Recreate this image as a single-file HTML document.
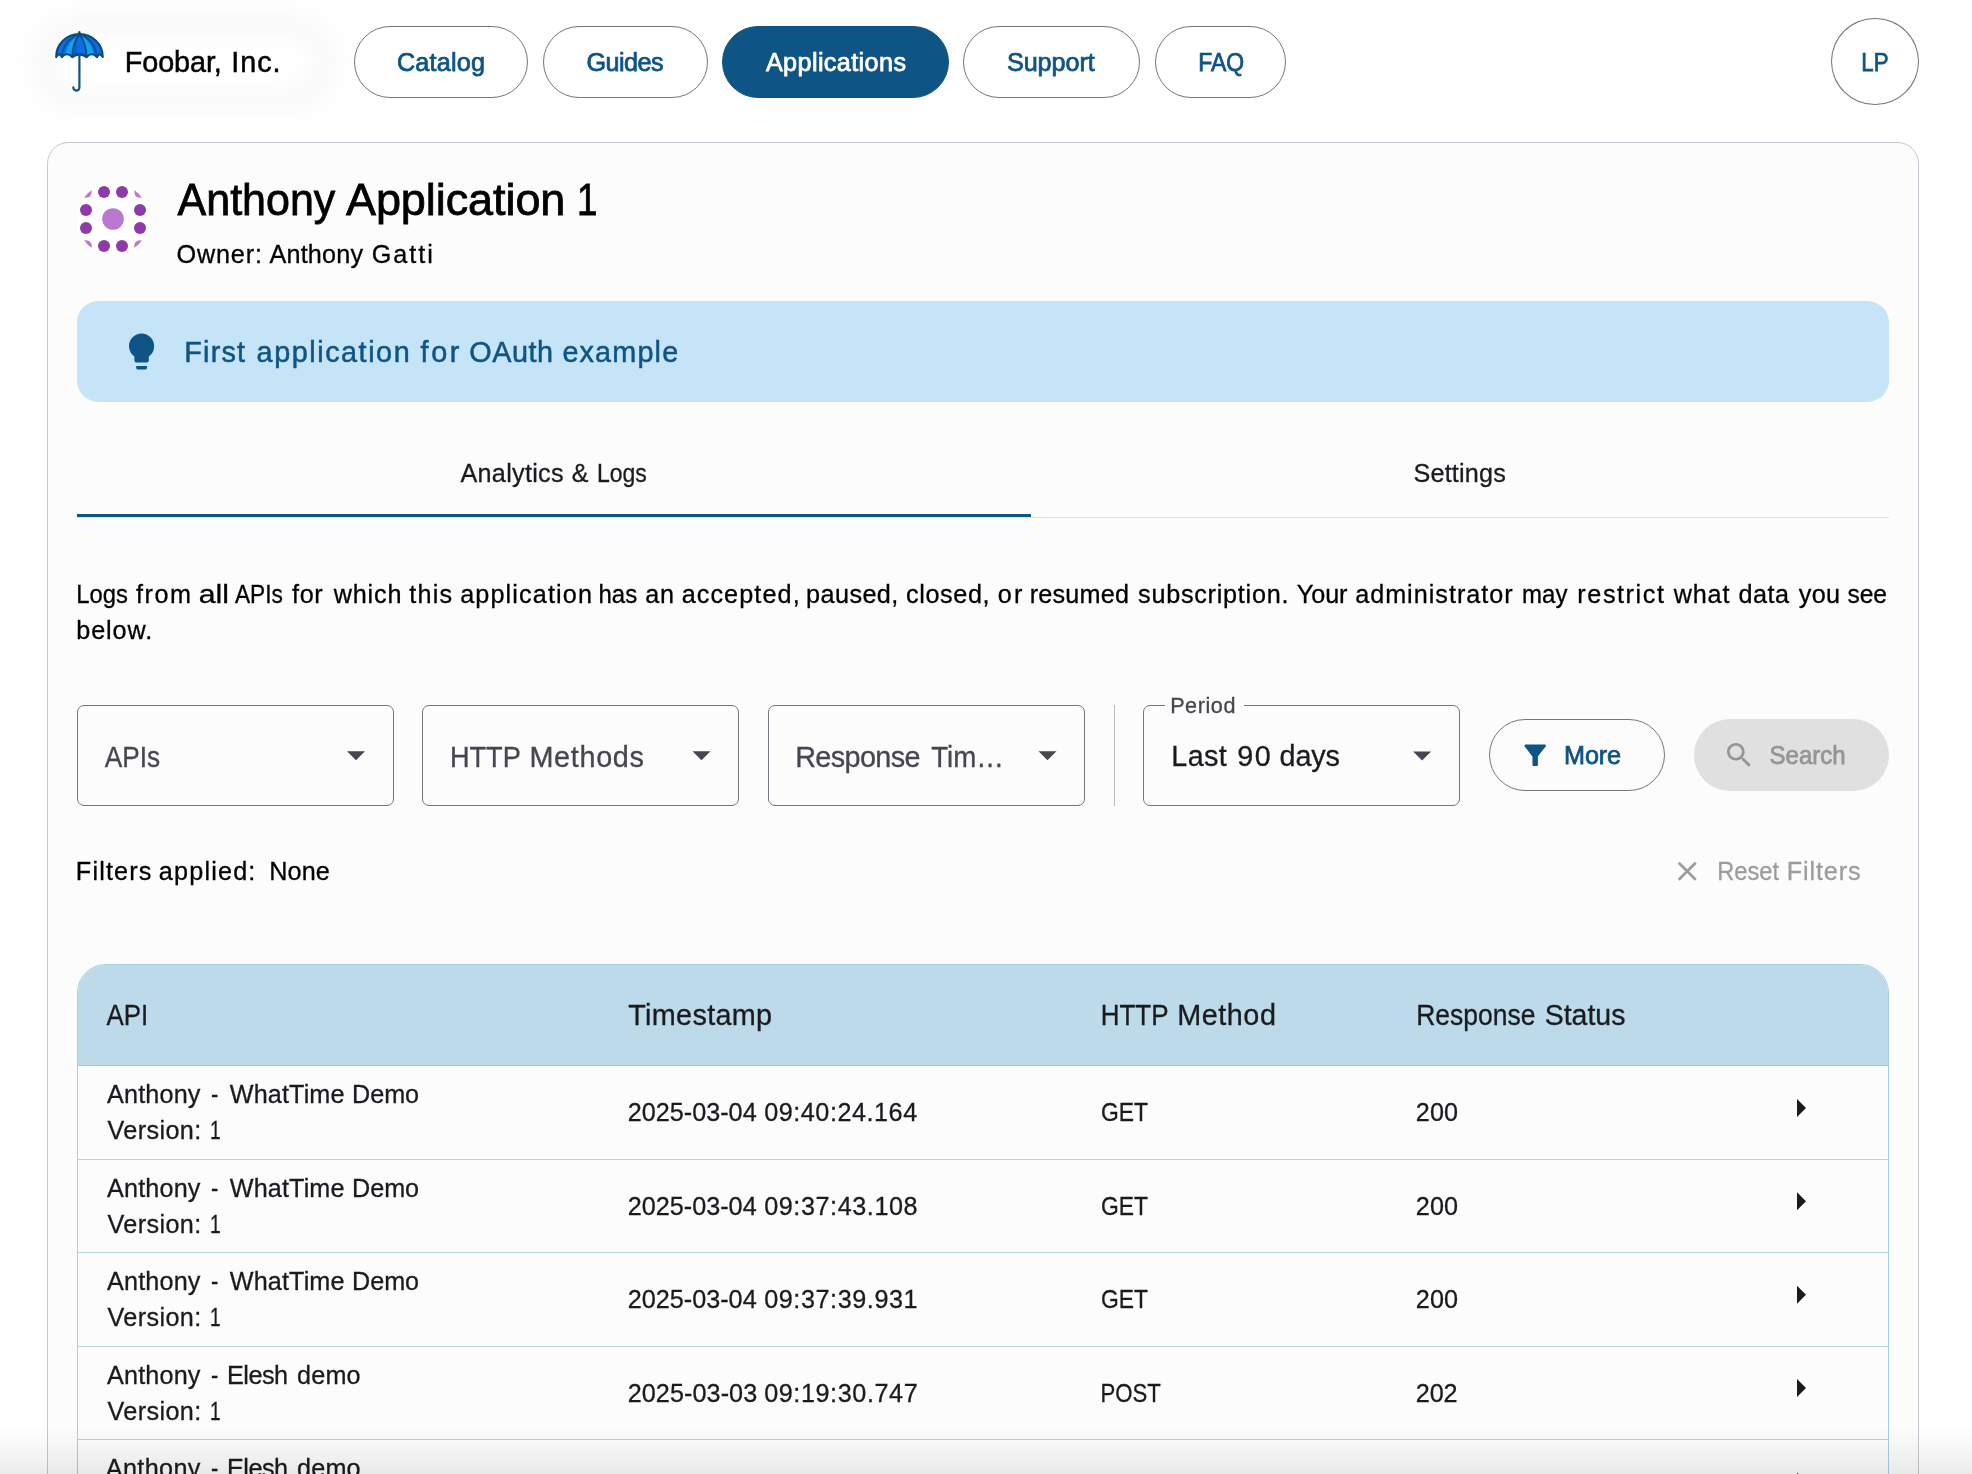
<!DOCTYPE html>
<html lang="en">
<head>
<meta charset="utf-8">
<title>Anthony Application 1 - Foobar, Inc.</title>
<style>
*{box-sizing:border-box;margin:0;padding:0}
html,body{width:1972px;height:1474px;overflow:hidden;background:#fff}
body{position:relative;font-family:"Liberation Sans",Arial,sans-serif;color:#1a1b1f}
.a{position:absolute}
.t{position:absolute;white-space:nowrap;line-height:1;transform-origin:0 0;font-weight:400;text-decoration:none;display:block}
.pill{position:absolute;top:26px;height:72px;border:1px solid #75767c;border-radius:36px;background:transparent}
.sel{position:absolute;top:705px;height:101px;width:317px;border:1px solid #74757e;border-radius:7px}
.hl{position:absolute;left:78px;width:1810px;height:1px;background:#b4d3e3}
svg{position:absolute;overflow:visible}
#page{position:relative;width:1972px;height:1474px;overflow:hidden}
#txt{position:absolute;left:0;top:0;width:1972px;height:1474px;will-change:transform}
.t{-webkit-text-stroke:0.3px currentColor}
.b{-webkit-text-stroke:0.75px currentColor}
.h{-webkit-text-stroke:0.8px currentColor}
.m{-webkit-text-stroke:0.5px currentColor}
</style>
</head>
<body>
<div id="page">
<!-- header -->
<header>
<div class="a" style="left:34px;top:16px;width:300px;height:92px;border-radius:46px;border:16px solid rgba(0,0,0,0.034);filter:blur(12px)"></div>
<svg id="umb" style="left:44px;top:20px" width="72" height="80" viewBox="0 0 72 80">
  <path d="M12.2 37C12.2 24.4 22.4 14.1 35.4 14.1S58.7 24.4 58.7 37Q55.8 31.6 52.9 37.1Q47.7 31.4 42.6 37.1Q35.4 31.4 28.2 37.1Q23 31.4 17.9 37.1Q15 31.6 12.2 37Z" fill="#0a6fe6"/>
  <path d="M35.4 14.1Q19 20.5 17.9 37.1Q23 31.4 28.2 37.1Q28.7 22.5 35.4 14.1Z" fill="#10a1f6"/>
  <path d="M35.4 14.1Q20.5 20.5 17.9 37.1L21.3 34.2Q23 22.5 35.4 14.1Z" fill="#0a70e8"/>
  <path d="M35.4 14.1Q42.1 22.5 42.6 37.1Q47.7 31.4 52.9 37.1Q51.8 20.5 35.4 14.1Z" fill="#10a1f6"/>
  <path d="M35.4 14.1Q28.7 22.5 28.2 37.1L32.6 34.4Q32.3 22.5 35.4 14.1Z" fill="#0860cc"/>
  <path d="M35.4 14.1Q51.8 20.5 52.9 37.1L50 34.4Q48 22 35.4 14.1Z" fill="#0a66d6"/>
  <g fill="none" stroke="#0d4b79" stroke-width="2.2" stroke-linejoin="round" stroke-linecap="round">
    <path d="M12.2 37C12.2 24.4 22.4 14.1 35.4 14.1S58.7 24.4 58.7 37Q55.8 31.6 52.9 37.1Q47.7 31.4 42.6 37.1Q35.4 31.4 28.2 37.1Q23 31.4 17.9 37.1Q15 31.6 12.2 37Z"/>
    <path d="M35.4 14.1Q19 20.5 17.9 37.1" stroke-width="1.6" stroke="#0c4f8a"/>
    <path d="M35.4 14.1Q28.7 22.5 28.2 37.1" stroke-width="1.8"/>
    <path d="M35.4 14.1Q42.1 22.5 42.6 37.1" stroke-width="1.8"/>
    <path d="M35.4 14.1Q51.8 20.5 52.9 37.1" stroke-width="1.6" stroke="#0c4f8a"/>
    <path d="M35.4 12.2V14.1"/>
    <path d="M35.4 35V67.7a3.05 3.05 0 0 1 -6.1 -0.4" stroke="#14527f"/>
  </g>
</svg>
<nav>
  <div class="pill" style="left:354px;width:174px"></div>
  <div class="pill" style="left:543px;width:165px"></div>
  <div class="pill" style="left:722px;width:227px;background:#0e5484;border-color:#0e5484"></div>
  <div class="pill" style="left:963px;width:177px"></div>
  <div class="pill" style="left:1155px;width:131px"></div>
</nav>
<div class="a" style="left:1831px;top:17.5px;width:88px;height:87.5px;border:1px solid #75767c;border-radius:50%"></div>
</header>

<!-- card -->
<main class="a" style="left:47px;top:142px;width:1872px;height:1400px;border:1px solid #c6c6d0;border-radius:21.6px;background:#fcfcfc"></main>

<svg id="ident" style="left:77px;top:183px" width="72" height="72" viewBox="0 0 72 72">
  <defs><clipPath id="cc"><circle cx="36" cy="36" r="36"/></clipPath></defs>
  <circle cx="36" cy="36" r="36" fill="#fff"/>
  <g clip-path="url(#cc)" fill="#ba78d0">
    <path d="M7 14.6Q15.6 15.6 14.6 7L0 0Z"/><path d="M65 14.6Q56.4 15.6 57.4 7L72 0Z"/><path d="M7 57.4Q15.6 56.4 14.6 65L0 72Z"/><path d="M65 57.4Q56.4 56.4 57.4 65L72 72Z"/>
  </g>
  <g fill="#8e3aa8">
    <circle cx="27" cy="9" r="6"/><circle cx="45" cy="9" r="6"/>
    <circle cx="9" cy="27" r="6"/><circle cx="63" cy="27" r="6"/>
    <circle cx="9" cy="45" r="6"/><circle cx="63" cy="45" r="6"/>
    <circle cx="27" cy="63" r="6"/><circle cx="45" cy="63" r="6"/>
  </g>
  <circle cx="36" cy="36" r="10.8" fill="#ba78d0"/>
</svg>

<!-- banner -->
<div class="a" style="left:77px;top:301px;width:1811.5px;height:100.5px;border-radius:21.6px;background:#c5e4f8"></div>
<svg id="bulb" style="left:120px;top:330px" width="43.2" height="43.2" viewBox="0 0 24 24"><path fill="#0e5484" d="M9 21c0 .55.45 1 1 1h4c.55 0 1-.45 1-1v-1H9v1zm3-19C8.14 2 5 5.14 5 9c0 2.38 1.19 4.47 3 5.74V17c0 .55.45 1 1 1h6c.55 0 1-.45 1-1v-2.26c1.81-1.27 3-3.36 3-5.74 0-3.86-3.14-7-7-7z"/></svg>

<!-- tabs -->
<div class="a" style="left:77px;top:517px;width:1811.5px;height:1px;background:#e1e0e8"></div>
<div class="a" style="left:77px;top:514px;width:954px;height:3px;background:#0e5484"></div>

<!-- filters -->
<div class="sel" style="left:77px"></div>
<div class="sel" style="left:422px"></div>
<div class="sel" style="left:768px"></div>
<div class="a" style="left:1114px;top:705px;width:1px;height:101px;background:#b9b9c0"></div>
<div class="sel" style="left:1143px"></div>
<div class="a" style="left:1165px;top:704px;width:79px;height:3px;background:#fcfcfc"></div>
<svg style="left:0;top:0" width="1972" height="900" viewBox="0 0 1972 900" fill="#45464f">
  <path d="M347 751.3h18l-9 9z"/>
  <path d="M692.5 751.3h18l-9 9z"/>
  <path d="M1038.5 751.3h18l-9 9z"/>
  <path d="M1413.1 751.4h18l-9 9z"/>
</svg>
<div class="a" style="left:1489px;top:719px;width:176px;height:72px;border:1px solid #75767c;border-radius:36px"></div>
<svg style="left:1518.6px;top:738.6px" width="32.4" height="32.4" viewBox="0 0 24 24"><path fill="#0e5484" d="M4.25 5.61C6.27 8.2 10 13 10 13v6c0 .55.45 1 1 1h2c.55 0 1-.45 1-1v-6s3.72-4.8 5.74-7.39c.51-.66.04-1.61-.79-1.61H5.04c-.83 0-1.3.95-.79 1.61z"/></svg>
<div class="a" style="left:1694px;top:719px;width:195px;height:72px;border-radius:36px;background:#e0e0e0"></div>
<svg style="left:1723px;top:739.2px" width="32.4" height="32.4" viewBox="0 0 24 24"><path fill="#959595" d="M15.5 14h-.79l-.28-.27C15.41 12.59 16 11.11 16 9.5 16 5.91 13.09 3 9.5 3S3 5.91 3 9.5 5.91 16 9.5 16c1.61 0 3.09-.59 4.23-1.57l.27.28v.79l5 4.99L20.49 19l-4.99-5zm-6 0C7.01 14 5 11.99 5 9.5S7.01 5 9.5 5 14 7.01 14 9.5 11.99 14 9.5 14z"/></svg>
<svg style="left:1670.75px;top:854.75px" width="32.4" height="32.4" viewBox="0 0 24 24"><path fill="#9c9c9c" d="M19 6.41L17.59 5 12 10.59 6.41 5 5 6.41 10.59 12 5 17.59 6.41 19 12 13.41 17.59 19 19 17.59 13.41 12z"/></svg>

<!-- table -->
<div class="a" style="left:77px;top:964px;width:1812px;height:600px;border:1px solid #a9cde0;border-radius:28.8px 28.8px 0 0;overflow:hidden"><div style="height:101px;background:#bcdaea"></div></div>
<div class="hl" style="top:1065px;background:#a8cadc"></div>
<div class="hl" style="top:1158.7px"></div>
<div class="hl" style="top:1251.9px"></div>
<div class="hl" style="top:1345.6px"></div>
<div class="hl" style="top:1438.7px"></div>
<svg style="left:0;top:1000px" width="1972" height="474" viewBox="0 1000 1972 474" fill="#1a1b1f">
  <path d="M1797 1099l9 9-9 9z"/>
  <path d="M1797 1192.35l9 9-9 9z"/>
  <path d="M1797 1285.7l9 9-9 9z"/>
  <path d="M1797 1379.05l9 9-9 9z"/>
  <path d="M1797 1472.4l9 9-9 9z"/>
</svg>
<!-- text -->
<div id="txt">
<span class="t m" id="br0" style="left:124px;top:48px;font-size:28.8px;color:#000;letter-spacing:-0.107px;transform:translateX(0.81px) scaleX(0.9996);">Foobar,</span>
<span class="t m" id="br1" style="left:231px;top:48px;font-size:28.8px;color:#000;letter-spacing:0.946px;transform:translateX(0.30px) scaleX(0.9996);">Inc.</span>
<a class="t b" id="n1" style="left:396px;top:50px;font-size:25.2px;color:#0e5484;letter-spacing:0.210px;transform:translateX(0.93px) scaleX(0.9996);">Catalog</a>
<a class="t b" id="n2" style="left:586px;top:50px;font-size:25.2px;color:#0e5484;letter-spacing:-0.571px;transform:translateX(0.55px) scaleX(0.9996);">Guides</a>
<a class="t b" id="n3" style="left:765px;top:50px;font-size:25.2px;color:#fff;letter-spacing:0.389px;transform:translateX(0.93px) scaleX(0.9996);">Applications</a>
<a class="t b" id="n4" style="left:1006px;top:50px;font-size:25.2px;color:#0e5484;letter-spacing:-0.065px;transform:translateX(0.94px) scaleX(0.9996);">Support</a>
<a class="t b" id="n5" style="left:1198px;top:50px;font-size:25.2px;color:#0e5484;transform:translateX(0.21px) scaleX(0.9122);">FAQ</a>
<span class="t b" id="lp" style="left:1861px;top:50px;font-size:25.2px;color:#0e5484;transform:translateX(0.37px) scaleX(0.8830);">LP</span>
<span class="t h" id="title0" style="left:177px;top:177px;font-size:45px;color:#000;transform:translateX(0.55px) scaleX(0.9557);">Anthony</span>
<span class="t h" id="title1" style="left:345px;top:177px;font-size:45px;color:#000;letter-spacing:-0.064px;transform:translateX(0.95px) scaleX(0.9996);">Application</span>
<span class="t h" id="title2" style="left:577px;top:177px;font-size:45px;color:#000;transform:translateX(0.03px) scaleX(0.8165);">1</span>
<span class="t" id="ow0" style="left:176px;top:242px;font-size:25.2px;color:#000;letter-spacing:0.822px;transform:translateX(0.62px) scaleX(0.9996);">Owner:</span>
<span class="t" id="ow1" style="left:269px;top:242px;font-size:25.2px;color:#000;letter-spacing:0.206px;transform:translateX(0.43px) scaleX(0.9996);">Anthony</span>
<span class="t" id="ow2" style="left:371px;top:242px;font-size:25.2px;color:#000;letter-spacing:1.939px;transform:translateX(0.81px) scaleX(0.9996);">Gatti</span>
<span class="t m" id="bn0" style="left:184px;top:338px;font-size:28.8px;color:#0e5484;letter-spacing:1.249px;transform:translateX(0.16px) scaleX(0.9996);">First</span>
<span class="t m" id="bn1" style="left:256px;top:338px;font-size:28.8px;color:#0e5484;letter-spacing:1.541px;transform:translateX(0.62px) scaleX(0.9996);">application</span>
<span class="t m" id="bn2" style="left:420px;top:338px;font-size:28.8px;color:#0e5484;letter-spacing:2.642px;transform:translateX(0.55px) scaleX(0.9996);">for</span>
<span class="t m" id="bn3" style="left:469px;top:338px;font-size:28.8px;color:#0e5484;letter-spacing:0.512px;transform:translateX(0.33px) scaleX(0.9996);">OAuth</span>
<span class="t m" id="bn4" style="left:562px;top:338px;font-size:28.8px;color:#0e5484;letter-spacing:1.162px;transform:translateX(0.38px) scaleX(0.9996);">example</span>
<span class="t" id="ta0" style="left:460px;top:461px;font-size:25.2px;color:#1a1b1f;letter-spacing:0.283px;transform:translateX(0.49px) scaleX(0.9996);">Analytics</span>
<span class="t" id="ta1" style="left:571px;top:461px;font-size:25.2px;color:#1a1b1f;transform:translateX(0.74px) scaleX(0.9935);">&amp;</span>
<span class="t" id="ta2" style="left:596px;top:461px;font-size:25.2px;color:#1a1b1f;transform:translateX(0.93px) scaleX(0.9130);">Logs</span>
<span class="t" id="tab2" style="left:1413px;top:461px;font-size:25.2px;color:#1a1b1f;letter-spacing:0.176px;transform:translateX(0.52px) scaleX(0.9996);">Settings</span>
<span class="t" id="p1w0" style="left:76px;top:582px;font-size:25.2px;color:#000;transform:translateX(0.24px) scaleX(0.9458);">Logs</span>
<span class="t" id="p1w1" style="left:136px;top:582px;font-size:25.2px;color:#000;letter-spacing:1.520px;transform:translateX(0.08px) scaleX(0.9996);">from</span>
<span class="t" id="p1w2" style="left:198px;top:582px;font-size:25.2px;color:#000;transform:translateX(0.73px) scaleX(1.1979);">all</span>
<span class="t" id="p1w3" style="left:234px;top:582px;font-size:25.2px;color:#000;transform:translateX(0.92px) scaleX(0.9018);">APIs</span>
<span class="t" id="p1w4" style="left:291px;top:582px;font-size:25.2px;color:#000;letter-spacing:0.686px;transform:translateX(0.97px) scaleX(0.9996);">for</span>
<span class="t" id="p1w5" style="left:333px;top:582px;font-size:25.2px;color:#000;letter-spacing:0.893px;transform:translateX(0.63px) scaleX(0.9996);">which</span>
<span class="t" id="p1w6" style="left:409px;top:582px;font-size:25.2px;color:#000;letter-spacing:1.178px;transform:translateX(0.28px) scaleX(0.9996);">this</span>
<span class="t" id="p1w7" style="left:460px;top:582px;font-size:25.2px;color:#000;letter-spacing:1.140px;transform:translateX(0.14px) scaleX(0.9996);">application</span>
<span class="t" id="p1w8" style="left:598px;top:582px;font-size:25.2px;color:#000;transform:translateX(0.50px) scaleX(0.9507);">has</span>
<span class="t" id="p1w9" style="left:645px;top:582px;font-size:25.2px;color:#000;letter-spacing:0.773px;transform:translateX(0.14px) scaleX(0.9996);">an</span>
<span class="t" id="p1w10" style="left:681px;top:582px;font-size:25.2px;color:#000;letter-spacing:1.102px;transform:translateX(0.64px) scaleX(0.9996);">accepted,</span>
<span class="t" id="p1w11" style="left:806px;top:582px;font-size:25.2px;color:#000;letter-spacing:0.425px;transform:translateX(0.12px) scaleX(0.9996);">paused,</span>
<span class="t" id="p1w12" style="left:905px;top:582px;font-size:25.2px;color:#000;letter-spacing:0.643px;transform:translateX(0.93px) scaleX(0.9996);">closed,</span>
<span class="t" id="p1w13" style="left:997px;top:582px;font-size:25.2px;color:#000;letter-spacing:2.106px;transform:translateX(0.82px) scaleX(0.9996);">or</span>
<span class="t" id="p1w14" style="left:1029px;top:582px;font-size:25.2px;color:#000;letter-spacing:0.214px;transform:translateX(0.68px) scaleX(0.9996);">resumed</span>
<span class="t" id="p1w15" style="left:1138px;top:582px;font-size:25.2px;color:#000;letter-spacing:0.759px;transform:translateX(0.05px) scaleX(0.9996);">subscription.</span>
<span class="t" id="p1w16" style="left:1296px;top:582px;font-size:25.2px;color:#000;letter-spacing:-0.090px;transform:translateX(0.83px) scaleX(0.9996);">Your</span>
<span class="t" id="p1w17" style="left:1355px;top:582px;font-size:25.2px;color:#000;letter-spacing:0.999px;transform:translateX(0.14px) scaleX(0.9996);">administrator</span>
<span class="t" id="p1w18" style="left:1522px;top:582px;font-size:25.2px;color:#000;transform:translateX(0.10px) scaleX(0.9524);">may</span>
<span class="t" id="p1w19" style="left:1577px;top:582px;font-size:25.2px;color:#000;letter-spacing:1.573px;transform:translateX(0.36px) scaleX(0.9996);">restrict</span>
<span class="t" id="p1w20" style="left:1673px;top:582px;font-size:25.2px;color:#000;letter-spacing:0.886px;transform:translateX(0.63px) scaleX(0.9996);">what</span>
<span class="t" id="p1w21" style="left:1738px;top:582px;font-size:25.2px;color:#000;letter-spacing:0.486px;transform:translateX(0.46px) scaleX(0.9996);">data</span>
<span class="t" id="p1w22" style="left:1798px;top:582px;font-size:25.2px;color:#000;letter-spacing:0.333px;transform:translateX(0.86px) scaleX(0.9996);">you</span>
<span class="t" id="p1w23" style="left:1847px;top:582px;font-size:25.2px;color:#000;transform:translateX(0.42px) scaleX(0.9755);">see</span>
<span class="t" id="p2" style="left:76px;top:618px;font-size:25.2px;color:#000;letter-spacing:0.898px;transform:translateX(0.29px) scaleX(0.9996);">below.</span>
<span class="t" id="s1" style="left:104px;top:743px;font-size:28.8px;color:#45464f;transform:translateX(0.78px) scaleX(0.9106);">APIs</span>
<span class="t" id="sb0" style="left:449px;top:743px;font-size:28.8px;color:#45464f;transform:translateX(0.92px) scaleX(0.9429);">HTTP</span>
<span class="t" id="sb1" style="left:529px;top:743px;font-size:28.8px;color:#45464f;letter-spacing:0.694px;transform:translateX(0.39px) scaleX(0.9996);">Methods</span>
<span class="t" id="sc0" style="left:795px;top:743px;font-size:28.8px;color:#45464f;letter-spacing:-0.626px;transform:translateX(0.19px) scaleX(0.9996);">Response</span>
<span class="t" id="sc1" style="left:931px;top:743px;font-size:28.8px;color:#45464f;transform:translateX(0.15px) scaleX(0.9610);">Tim…</span>
<span class="t" id="plab" style="left:1170px;top:695px;font-size:21.6px;color:#45464f;letter-spacing:0.575px;transform:translateX(0.15px) scaleX(0.9996);">Period</span>
<span class="t" id="sd0" style="left:1171px;top:742px;font-size:28.8px;color:#1a1b1f;letter-spacing:0.380px;transform:translateX(0.28px) scaleX(0.9996);">Last</span>
<span class="t" id="sd1" style="left:1237px;top:742px;font-size:28.8px;color:#1a1b1f;letter-spacing:1.390px;transform:translateX(0.24px) scaleX(0.9996);">90</span>
<span class="t" id="sd2" style="left:1279px;top:742px;font-size:28.8px;color:#1a1b1f;letter-spacing:-0.158px;transform:translateX(0.58px) scaleX(0.9996);">days</span>
<span class="t b" id="more" style="left:1563px;top:743px;font-size:25.2px;color:#0e5484;letter-spacing:-0.076px;transform:translateX(0.99px) scaleX(0.9996);">More</span>
<span class="t b" id="search" style="left:1769px;top:743px;font-size:25.2px;color:#959595;transform:translateX(0.54px) scaleX(0.9525);">Search</span>
<span class="t" id="fa0" style="left:75px;top:859px;font-size:25.2px;color:#000;letter-spacing:1.162px;transform:translateX(0.87px) scaleX(0.9996);">Filters</span>
<span class="t" id="fa1" style="left:158px;top:859px;font-size:25.2px;color:#000;letter-spacing:1.199px;transform:translateX(0.78px) scaleX(0.9996);">applied:</span>
<span class="t" id="fn" style="left:269px;top:859px;font-size:25.2px;color:#000;letter-spacing:0.061px;transform:translateX(0.32px) scaleX(0.9996);">None</span>
<span class="t" id="rs0" style="left:1717px;top:859px;font-size:25.2px;color:#9c9c9c;transform:translateX(0.27px) scaleX(0.9382);">Reset</span>
<span class="t" id="rs1" style="left:1786px;top:859px;font-size:25.2px;color:#9c9c9c;letter-spacing:0.853px;transform:translateX(0.84px) scaleX(0.9996);">Filters</span>
<span class="t" id="h1" style="left:106px;top:1001px;font-size:28.8px;color:#1a1b1f;transform:translateX(0.59px) scaleX(0.8985);">API</span>
<span class="t" id="h2" style="left:628px;top:1001px;font-size:28.8px;color:#1a1b1f;letter-spacing:0.315px;transform:translateX(0.29px) scaleX(0.9996);">Timestamp</span>
<span class="t" id="hc0" style="left:1100px;top:1001px;font-size:28.8px;color:#1a1b1f;transform:translateX(0.70px) scaleX(0.9029);">HTTP</span>
<span class="t" id="hc1" style="left:1177px;top:1001px;font-size:28.8px;color:#1a1b1f;letter-spacing:0.522px;transform:translateX(0.28px) scaleX(0.9996);">Method</span>
<span class="t" id="hd0" style="left:1416px;top:1001px;font-size:28.8px;color:#1a1b1f;transform:translateX(0.15px) scaleX(0.9204);">Response</span>
<span class="t" id="hd1" style="left:1544px;top:1001px;font-size:28.8px;color:#1a1b1f;transform:translateX(0.65px) scaleX(0.9892);">Status</span>
<span class="t" id="r0a0" style="left:107px;top:1082px;font-size:25.2px;color:#1a1b1f;letter-spacing:0.142px;transform:translateX(0.12px) scaleX(0.9996);">Anthony</span>
<span class="t" id="r0a1" style="left:211px;top:1082px;font-size:25.2px;color:#1a1b1f;transform:translateX(0.02px) scaleX(0.8733);">-</span>
<span class="t" id="r0a2" style="left:229px;top:1082px;font-size:25.2px;color:#1a1b1f;letter-spacing:0.111px;transform:translateX(0.87px) scaleX(0.9996);">WhatTime</span>
<span class="t" id="r0a3" style="left:352px;top:1082px;font-size:25.2px;color:#1a1b1f;letter-spacing:-0.041px;transform:translateX(0.04px) scaleX(0.9996);">Demo</span>
<span class="t" id="r0v0" style="left:107px;top:1118px;font-size:25.2px;color:#1a1b1f;letter-spacing:0.379px;transform:translateX(0.58px) scaleX(0.9996);">Version:</span>
<span class="t" id="r0v1" style="left:209px;top:1118px;font-size:25.2px;color:#1a1b1f;transform:translateX(0.88px) scaleX(0.7621);">1</span>
<span class="t" id="r0d" style="left:627px;top:1100px;font-size:25.2px;color:#1a1b1f;letter-spacing:0.017px;transform:translateX(0.70px) scaleX(0.9996);">2025-03-04</span>
<span class="t" id="r0t" style="left:764px;top:1100px;font-size:25.2px;color:#1a1b1f;letter-spacing:0.542px;transform:translateX(0.17px) scaleX(0.9996);">09:40:24.164</span>
<span class="t" id="r0m" style="left:1100px;top:1100px;font-size:25.2px;color:#1a1b1f;transform:translateX(0.92px) scaleX(0.9080);">GET</span>
<span class="t" id="r0s" style="left:1415px;top:1100px;font-size:25.2px;color:#1a1b1f;letter-spacing:0.076px;transform:translateX(0.80px) scaleX(0.9996);">200</span>
<span class="t" id="r1a0" style="left:107px;top:1176px;font-size:25.2px;color:#1a1b1f;letter-spacing:0.142px;transform:translateX(0.12px) scaleX(0.9996);">Anthony</span>
<span class="t" id="r1a1" style="left:211px;top:1176px;font-size:25.2px;color:#1a1b1f;transform:translateX(0.02px) scaleX(0.8733);">-</span>
<span class="t" id="r1a2" style="left:229px;top:1176px;font-size:25.2px;color:#1a1b1f;letter-spacing:0.111px;transform:translateX(0.87px) scaleX(0.9996);">WhatTime</span>
<span class="t" id="r1a3" style="left:352px;top:1176px;font-size:25.2px;color:#1a1b1f;letter-spacing:-0.041px;transform:translateX(0.04px) scaleX(0.9996);">Demo</span>
<span class="t" id="r1v0" style="left:107px;top:1212px;font-size:25.2px;color:#1a1b1f;letter-spacing:0.379px;transform:translateX(0.58px) scaleX(0.9996);">Version:</span>
<span class="t" id="r1v1" style="left:209px;top:1212px;font-size:25.2px;color:#1a1b1f;transform:translateX(0.88px) scaleX(0.7621);">1</span>
<span class="t" id="r1d" style="left:627px;top:1194px;font-size:25.2px;color:#1a1b1f;letter-spacing:0.017px;transform:translateX(0.70px) scaleX(0.9996);">2025-03-04</span>
<span class="t" id="r1t" style="left:764px;top:1194px;font-size:25.2px;color:#1a1b1f;letter-spacing:0.585px;transform:translateX(0.17px) scaleX(0.9996);">09:37:43.108</span>
<span class="t" id="r1m" style="left:1100px;top:1194px;font-size:25.2px;color:#1a1b1f;transform:translateX(0.92px) scaleX(0.9080);">GET</span>
<span class="t" id="r1s" style="left:1415px;top:1194px;font-size:25.2px;color:#1a1b1f;letter-spacing:0.076px;transform:translateX(0.80px) scaleX(0.9996);">200</span>
<span class="t" id="r2a0" style="left:107px;top:1269px;font-size:25.2px;color:#1a1b1f;letter-spacing:0.142px;transform:translateX(0.12px) scaleX(0.9996);">Anthony</span>
<span class="t" id="r2a1" style="left:211px;top:1269px;font-size:25.2px;color:#1a1b1f;transform:translateX(0.02px) scaleX(0.8733);">-</span>
<span class="t" id="r2a2" style="left:229px;top:1269px;font-size:25.2px;color:#1a1b1f;letter-spacing:0.111px;transform:translateX(0.87px) scaleX(0.9996);">WhatTime</span>
<span class="t" id="r2a3" style="left:352px;top:1269px;font-size:25.2px;color:#1a1b1f;letter-spacing:-0.041px;transform:translateX(0.04px) scaleX(0.9996);">Demo</span>
<span class="t" id="r2v0" style="left:107px;top:1305px;font-size:25.2px;color:#1a1b1f;letter-spacing:0.379px;transform:translateX(0.58px) scaleX(0.9996);">Version:</span>
<span class="t" id="r2v1" style="left:209px;top:1305px;font-size:25.2px;color:#1a1b1f;transform:translateX(0.88px) scaleX(0.7621);">1</span>
<span class="t" id="r2d" style="left:627px;top:1287px;font-size:25.2px;color:#1a1b1f;letter-spacing:0.017px;transform:translateX(0.70px) scaleX(0.9996);">2025-03-04</span>
<span class="t" id="r2t" style="left:764px;top:1287px;font-size:25.2px;color:#1a1b1f;letter-spacing:0.581px;transform:translateX(0.17px) scaleX(0.9996);">09:37:39.931</span>
<span class="t" id="r2m" style="left:1100px;top:1287px;font-size:25.2px;color:#1a1b1f;transform:translateX(0.92px) scaleX(0.9080);">GET</span>
<span class="t" id="r2s" style="left:1415px;top:1287px;font-size:25.2px;color:#1a1b1f;letter-spacing:0.076px;transform:translateX(0.80px) scaleX(0.9996);">200</span>
<span class="t" id="r3a0" style="left:107px;top:1363px;font-size:25.2px;color:#1a1b1f;letter-spacing:0.142px;transform:translateX(0.12px) scaleX(0.9996);">Anthony</span>
<span class="t" id="r3a1" style="left:211px;top:1363px;font-size:25.2px;color:#1a1b1f;transform:translateX(0.02px) scaleX(0.8733);">-</span>
<span class="t" id="r3a2" style="left:227px;top:1363px;font-size:25.2px;color:#1a1b1f;letter-spacing:-0.520px;transform:translateX(0.08px) scaleX(0.9996);">Elesh</span>
<span class="t" id="r3a3" style="left:296px;top:1363px;font-size:25.2px;color:#1a1b1f;letter-spacing:0.222px;transform:translateX(0.98px) scaleX(0.9996);">demo</span>
<span class="t" id="r3v0" style="left:107px;top:1399px;font-size:25.2px;color:#1a1b1f;letter-spacing:0.379px;transform:translateX(0.58px) scaleX(0.9996);">Version:</span>
<span class="t" id="r3v1" style="left:209px;top:1399px;font-size:25.2px;color:#1a1b1f;transform:translateX(0.88px) scaleX(0.7621);">1</span>
<span class="t" id="r3d" style="left:627px;top:1381px;font-size:25.2px;color:#1a1b1f;letter-spacing:0.080px;transform:translateX(0.70px) scaleX(0.9996);">2025-03-03</span>
<span class="t" id="r3t" style="left:764px;top:1381px;font-size:25.2px;color:#1a1b1f;letter-spacing:0.588px;transform:translateX(0.17px) scaleX(0.9996);">09:19:30.747</span>
<span class="t" id="r3m" style="left:1100px;top:1381px;font-size:25.2px;color:#1a1b1f;transform:translateX(0.50px) scaleX(0.8800);">POST</span>
<span class="t" id="r3s" style="left:1415px;top:1381px;font-size:25.2px;color:#1a1b1f;letter-spacing:-0.101px;transform:translateX(0.80px) scaleX(0.9996);">202</span>
<span class="t" id="r4a0" style="left:105px;top:1456px;font-size:25.2px;color:#1a1b1f;letter-spacing:0.369px;transform:translateX(0.76px) scaleX(0.9996);">Anthony</span>
<span class="t" id="r4a1" style="left:211px;top:1456px;font-size:25.2px;color:#1a1b1f;transform:translateX(0.02px) scaleX(0.8733);">-</span>
<span class="t" id="r4a2" style="left:227px;top:1456px;font-size:25.2px;color:#1a1b1f;letter-spacing:-0.507px;transform:translateX(0.08px) scaleX(0.9996);">Elesh</span>
<span class="t" id="r4a3" style="left:296px;top:1456px;font-size:25.2px;color:#1a1b1f;letter-spacing:0.222px;transform:translateX(0.98px) scaleX(0.9996);">demo</span>
<span class="t" id="r4v0" style="left:107px;top:1492px;font-size:25.2px;color:#1a1b1f;transform:translateX(0.70px) scaleX(0.9996);">Version:</span>
<span class="t" id="r4v1" style="left:211px;top:1492px;font-size:25.2px;color:#1a1b1f;transform:translateX(0.20px) scaleX(0.9996);">1</span>
</div>
<div class="a" style="left:0;top:1426px;width:1972px;height:48px;background:linear-gradient(to bottom,rgba(0,0,0,0),rgba(0,0,0,0.025) 40%,rgba(0,0,0,0.08))"></div>
</div>
</body>
</html>
